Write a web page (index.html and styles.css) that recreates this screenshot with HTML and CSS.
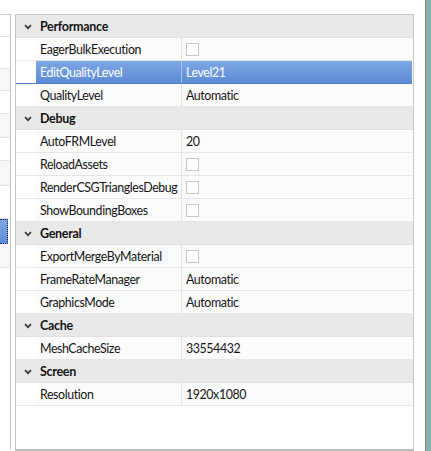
FILE: index.html
```html
<!DOCTYPE html>
<html>
<head>
<meta charset="utf-8">
<link rel="stylesheet" href="styles.css">
</head>
<body>
<div class="screen">
  <div class="side">
    <div class="side-row h22"></div>
    <div class="side-row h32"></div>
    <div class="side-row h22 alt"></div>
    <div class="side-row h23"></div>
    <div class="side-row h24 alt"></div>
    <div class="side-row h23"></div>
    <div class="side-row h25 alt"></div>
    <div class="side-row h33"></div>
    <div class="side-row sel"></div>
    <div class="side-row h24 alt"></div>
  </div>
  <div class="panel">
    <div class="group"><span class="chev"><svg width="8" height="6" viewBox="0 0 8 6"><path d="M1 1.2 L4 4.2 L7 1.2" fill="none" stroke="#3a3a3a" stroke-width="1.7"/></svg></span><span class="gname">Performance</span></div>
    <div class="prop"><span class="name">EagerBulkExecution</span><span class="val"><span class="check"></span></span></div>
    <div class="prop selected"><span class="name">EditQualityLevel</span><span class="val">Level21</span></div>
    <div class="prop"><span class="name">QualityLevel</span><span class="val">Automatic</span></div>

    <div class="group"><span class="chev"><svg width="8" height="6" viewBox="0 0 8 6"><path d="M1 1.2 L4 4.2 L7 1.2" fill="none" stroke="#3a3a3a" stroke-width="1.7"/></svg></span><span class="gname">Debug</span></div>
    <div class="prop"><span class="name">AutoFRMLevel</span><span class="val">20</span></div>
    <div class="prop"><span class="name">ReloadAssets</span><span class="val"><span class="check"></span></span></div>
    <div class="prop"><span class="name">RenderCSGTrianglesDebug</span><span class="val"><span class="check"></span></span></div>
    <div class="prop"><span class="name">ShowBoundingBoxes</span><span class="val"><span class="check"></span></span></div>

    <div class="group"><span class="chev"><svg width="8" height="6" viewBox="0 0 8 6"><path d="M1 1.2 L4 4.2 L7 1.2" fill="none" stroke="#3a3a3a" stroke-width="1.7"/></svg></span><span class="gname">General</span></div>
    <div class="prop"><span class="name">ExportMergeByMaterial</span><span class="val"><span class="check"></span></span></div>
    <div class="prop"><span class="name">FrameRateManager</span><span class="val">Automatic</span></div>
    <div class="prop"><span class="name">GraphicsMode</span><span class="val">Automatic</span></div>

    <div class="group"><span class="chev"><svg width="8" height="6" viewBox="0 0 8 6"><path d="M1 1.2 L4 4.2 L7 1.2" fill="none" stroke="#3a3a3a" stroke-width="1.7"/></svg></span><span class="gname">Cache</span></div>
    <div class="prop"><span class="name">MeshCacheSize</span><span class="val">33554432</span></div>

    <div class="group"><span class="chev"><svg width="8" height="6" viewBox="0 0 8 6"><path d="M1 1.2 L4 4.2 L7 1.2" fill="none" stroke="#3a3a3a" stroke-width="1.7"/></svg></span><span class="gname">Screen</span></div>
    <div class="prop"><span class="name">Resolution</span><span class="val">1920x1080</span></div>
  </div>
  <div class="gap"></div>
  <div class="edge"></div>
</div>
</body>
</html>
```
FILE: styles.css
```css
html, body {
  margin: 0;
  padding: 0;
  background: #ffffff;
  width: 431px;
  height: 451px;
  overflow: hidden;
}
.screen {
  display: flex;
  align-items: flex-start;
  height: 451px;
  font-family: Lato, "Liberation Sans", sans-serif;
  font-size: 12.4px;
  letter-spacing: -0.4px;
  color: #141414;
}
.side {
  margin-top: 14px;
  width: 10px;
  height: 434px;
  border-top: 1px solid #c8c8c8;
  border-right: 1px solid #c0c0c0;
  display: flex;
  flex-direction: column;
  background: #ffffff;
}
.side-row {
  border-bottom: 1px solid #e4e4e4;
  flex: none;
}
.side-row.alt { background: #f7f7f7; }
.h22 { height: 21px; }
.h23 { height: 22px; }
.h24 { height: 23px; }
.h25 { height: 24px; }
.h32 { height: 31px; }
.h33 { height: 32px; }
.side-row.sel {
  height: 23px;
  margin-right: 2px;
  background: linear-gradient(#80a8e4, #5a8ad6);
  border: 1px dotted #1a2a55;
  border-left: none;
}
.panel {
  margin-top: 14px;
  margin-left: 4px;
  width: 398px;
  height: 434px;
  border: 1px solid #c4c4c4;
  border-bottom: 2px solid #bdbdbd;
  display: flex;
  flex-direction: column;
  background: #ffffff;
}
.group {
  height: 22px;
  border-bottom: 1px solid #e0e0e0;
  background: #e8e8e8;
  display: flex;
  align-items: center;
  flex: none;
}
.chev {
  width: 24px;
  display: flex;
  justify-content: center;
  padding-top: 1px;
}
.gname {
  font-weight: bold;
  font-size: 12.5px;
  letter-spacing: -0.3px;
  color: #141414;
}
.prop {
  height: 22px;
  width: 396px;
  border-bottom: 1px solid #e6e6e6;
  display: grid;
  grid-template-columns: 20px 146px 1fr;
  background: #fbfbfb;
  flex: none;
}
.prop::before {
  content: "";
  background: #ffffff;
}
.name {
  padding-left: 4px;
  display: flex;
  align-items: center;
  border-right: 1px solid #e2e2e2;
  white-space: nowrap;
  overflow: hidden;
}
.val {
  padding-left: 4px;
  display: flex;
  align-items: center;
  white-space: nowrap;
}
.prop.selected {
  background: linear-gradient(#7ea6e3, #5b8bd7);
  color: #ffffff;
  border-bottom-color: #4f7fcc;
}
.prop.selected .name { border-right-color: #a9c3ee; }
.check {
  width: 11px;
  height: 11px;
  border: 1px solid #c6c6c6;
  background: #ffffff;
}
.gap {
  width: 11px;
  flex: none;
}
.edge {
  flex: none;
  width: 5px;
  height: 451px;
  border-left: 1px solid #9a8060;
  background: linear-gradient(90deg, #8fb0a8, #7eb3b4);
}
```
